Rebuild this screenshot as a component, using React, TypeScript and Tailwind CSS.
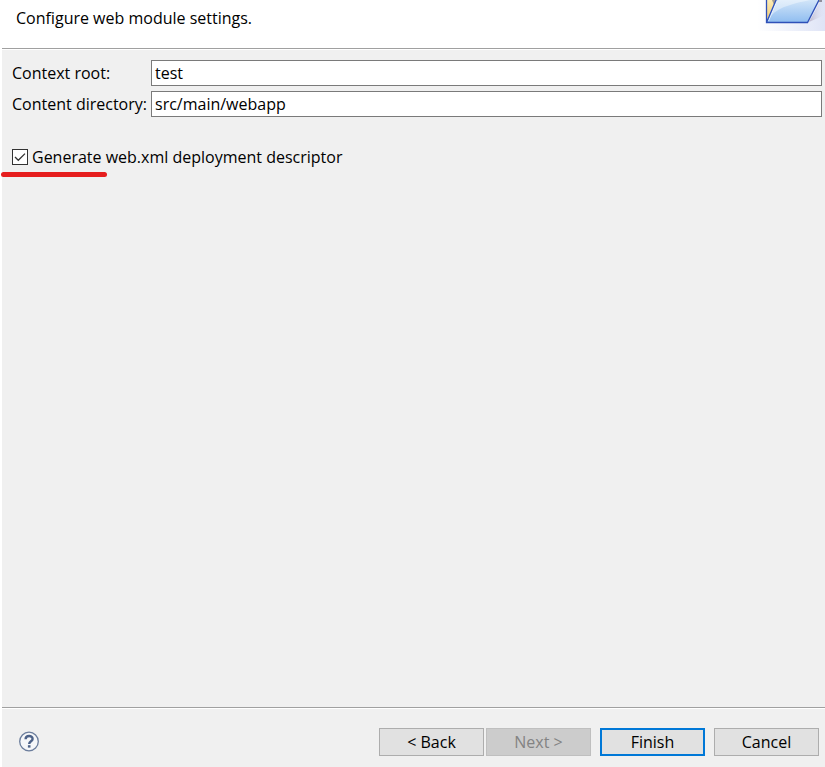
import React, { useState } from 'react';

const FolderBanner: React.FC = () => (
  <svg className="w-20 h-[31px] shrink-0" viewBox="0 0 80 31" aria-hidden="true">
    <defs>
      <linearGradient id="haze" x1="0" y1="0" x2="1" y2="0">
        <stop offset="0.15" stopColor="#ffffff" />
        <stop offset="1" stopColor="#dfe4f6" />
      </linearGradient>
      <linearGradient id="flap" x1="0" y1="0" x2="0" y2="1">
        <stop offset="0" stopColor="#d5e7f9" />
        <stop offset="1" stopColor="#8fbdf0" />
      </linearGradient>
      <linearGradient id="paper" x1="0" y1="0" x2="0" y2="1">
        <stop offset="0" stopColor="#fdeeb8" />
        <stop offset="1" stopColor="#f3c76c" />
      </linearGradient>
      <linearGradient id="shade" x1="0" y1="0" x2="1" y2="0">
        <stop offset="0" stopColor="#bcb6cb" />
        <stop offset="1" stopColor="#dfe4f6" stopOpacity="0" />
      </linearGradient>
    </defs>
    <rect width="80" height="31" fill="url(#haze)" />
    <path d="M75 2 L80 2 L80 15 L64 22 Z" fill="url(#shade)" />
    <path d="M21 -1 H31 L21 22 Z" fill="url(#paper)" />
    <path d="M27 0 H31 L29 5 Z" fill="#a69c8d" />
    <path d="M31.500 -1 L21.500 22.500 H62.500 L74.500 -1 Z" fill="url(#flap)" />
    <path d="M33 0 H65 C52 3 34 6 26 16 Z" fill="#ffffff" opacity="0.4" />
    <path d="M23.500 21 L32 1" fill="none" stroke="#ffffff" strokeWidth="1" opacity="0.7" />
    <path d="M21.500 -1 V22.500 H62.500 L74.500 -1 M31.500 -1 L21.500 22.500" fill="none" stroke="#2f50b8" strokeWidth="1.300" />
    <path d="M74 0 H77 V2 H74 Z" fill="#8f8f9c" />
  </svg>
);

// Etched divider: grey line with a white one under it
const Separator: React.FC = () => (
  <div className="h-0.5 shrink-0 bg-white border-t border-[#a0a0a0]"></div>
);

const inputClass = 'w-full min-w-0 h-[26px] px-[3px] bg-white border border-[#7a7a7a] focus:outline-none';
const buttonClass = 'w-[105px] h-7 border text-center';

const App: React.FC = () => {
  const [contextRoot, setContextRoot] = useState('test');
  const [contentDir, setContentDir] = useState('src/main/webapp');
  const [generate, setGenerate] = useState(true);

  return (
    <div className="min-h-screen flex flex-col pl-0.5 bg-white text-black font-['Open_Sans','Noto_Sans',sans-serif] text-base leading-6">
      {/* Title area */}
      <header className="flex justify-between items-start h-12 shrink-0">
        <h1 className="pl-3.5 pt-1.5">Configure web module settings.</h1>
        <FolderBanner />
      </header>
      <Separator />

      {/* Settings */}
      <main className="flex-1 bg-[#f0f0f0] pt-2.5 pl-2.5 pr-[3px]">
        <div className="grid grid-cols-[135px_1fr] items-center gap-x-1 gap-y-[5px] whitespace-nowrap">
          <label htmlFor="context-root">Context root:</label>
          <input
            id="context-root"
            type="text"
            value={contextRoot}
            onChange={(e) => setContextRoot(e.target.value)}
            className={inputClass}
          />
          <label htmlFor="content-dir">Content directory:</label>
          <input
            id="content-dir"
            type="text"
            value={contentDir}
            onChange={(e) => setContentDir(e.target.value)}
            className={inputClass}
          />
        </div>

        <div className="relative flex items-center gap-1 mt-7">
          <span className="relative flex w-4 h-4">
            <input
              id="generate"
              type="checkbox"
              checked={generate}
              onChange={(e) => setGenerate(e.target.checked)}
              className="w-4 h-4 appearance-none bg-white border border-[#333333]"
            />
            {generate && (
              <svg className="absolute inset-0 w-4 h-4 pointer-events-none" viewBox="0 0 16 16" fill="none" stroke="#333333" strokeWidth="1.300">
                <path d="M3 8 L6.300 11.300 L13 4.600" />
              </svg>
            )}
          </span>
          <label htmlFor="generate">Generate web.xml deployment descriptor</label>
          {/* Red marker under the option */}
          <span className="absolute -left-[11px] top-[27px] w-[106px] h-[5px] rounded-full bg-[#e61e1e]"></span>
        </div>
      </main>

      <div className="bg-[#f0f0f0]">
        <Separator />
        <footer className="flex items-center justify-between h-[58px] pl-4 pr-1.5 pt-2">
          <button type="button" aria-label="Help" className="w-[22px] h-[22px]">
            <svg className="w-[22px] h-[22px]" viewBox="0 0 22 22" fill="none">
              <circle cx="11" cy="10.500" r="9.300" fill="#f6f7f9" stroke="#6b7d9c" strokeWidth="1.300" />
              <path d="M7.600 8.200 C7.600 4 14.600 4 14.600 7.900 C14.600 10.200 11.200 10.200 11.200 12.900" stroke="#4d6288" strokeWidth="2.400" />
              <rect x="9.900" y="14.200" width="2.600" height="2.400" fill="#4d6288" />
            </svg>
          </button>
          <div className="flex">
            <button type="button" className={`${buttonClass} bg-[#e1e1e1] border-[#adadad]`}>
              &lt; Back
            </button>
            <button type="button" disabled className={`${buttonClass} ml-0.5 bg-[#cccccc] border-[#bfbfbf] text-[#838383]`}>
              Next &gt;
            </button>
            <button type="button" className="w-[105px] h-7 ml-[9px] bg-[#e1e1e1] border-2 border-[#0078d7] text-center">
              Finish
            </button>
            <button type="button" className={`${buttonClass} ml-[9px] bg-[#e1e1e1] border-[#adadad]`}>
              Cancel
            </button>
          </div>
        </footer>
      </div>
    </div>
  );
};

export default App;
